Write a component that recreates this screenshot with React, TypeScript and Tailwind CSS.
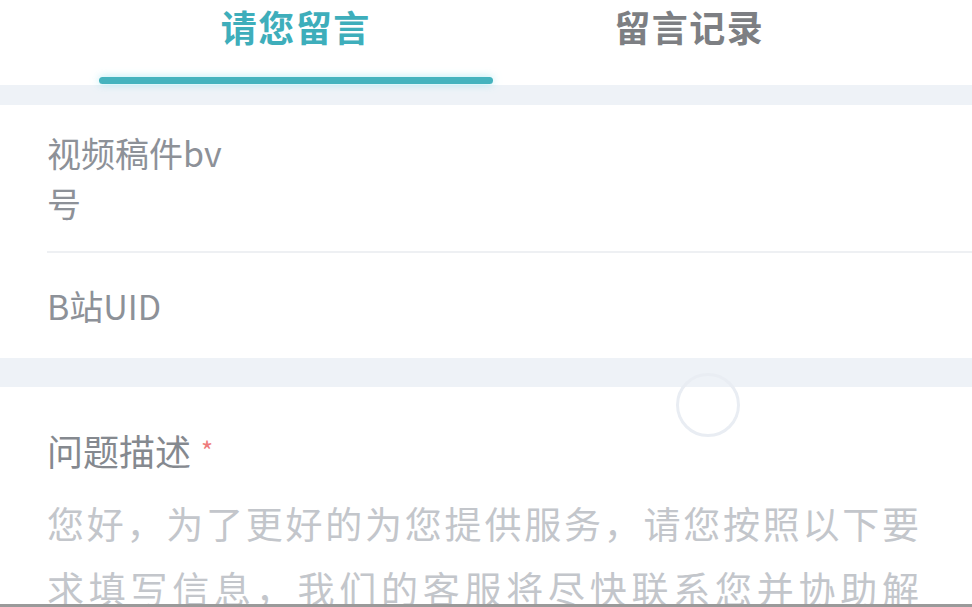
import { useState } from "react";

type Tab = "form" | "history";

const TABS: { key: Tab; label: string }[] = [
  { key: "form", label: "请您留言" },
  { key: "history", label: "留言记录" },
];

const FONT = "[font-family:'Noto_Sans_CJK_SC','Noto_Sans',sans-serif]";

// placeholder text, split the way the form wraps it (justified lines)
const PLACEHOLDER_LINES = [
  "您好，为了更好的为您提供服务，请您按照以下要",
  "求填写信息，我们的客服将尽快联系您并协助解",
];

function FieldRow({ label, last }: { label: string; last?: boolean }) {
  return (
    <div className={`flex items-center ${last ? "h-[105px]" : "h-[148px] border-b-2 border-[#eef0f3]"}`}>
      <div className="w-[196px] text-[34px] leading-[50px] text-[#8d9198]">{label}</div>
      <div className="flex-1" />
    </div>
  );
}

export default function App() {
  const [active, setActive] = useState<Tab>("form");

  return (
    <div className={`relative h-[607px] w-[972px] overflow-hidden bg-white ${FONT}`}>
      {/* tabs */}
      <div className="flex h-[85px] pl-[99px] pr-[86px]">
        {TABS.map((tab) => {
          const on = tab.key === active;
          return (
            <button
              key={tab.key}
              onClick={() => setActive(tab.key)}
              className="relative flex flex-1 justify-center pt-[1px]"
            >
              <span
                className={`text-[36px] font-bold leading-[50px] tracking-[1.5px] ${on ? "text-[#3eaebb]" : "text-[#7d7f83]"}`}
              >
                {tab.label}
              </span>
              {on ? (
                <span className="absolute bottom-[1px] left-0 right-0 h-[7px] rounded-full bg-[#45b3be] shadow-[0_0_8px_rgba(120,220,235,0.6)]" />
              ) : null}
            </button>
          );
        })}
      </div>

      <div className="h-[20px] bg-[#eef2f7]" />

      {/* basic info */}
      <div className="pl-[47px]">
        <FieldRow label="视频稿件bv号" />
        <FieldRow label="B站UID" last />
      </div>

      <div className="h-[29px] bg-[#eef2f7]" />

      {/* description */}
      <div className="pl-[47px] pr-[52px] pt-[38px]">
        <div className="flex items-center text-[36px] leading-[50px] text-[#85898f]">
          问题描述
          <span className="ml-[10px] text-[26px] text-[#ee7b7b]">*</span>
        </div>
        <div className="mt-[16px] text-[37px] leading-[65px] tracking-[1px] text-[#c3c6cb]">
          {PLACEHOLDER_LINES.map((line) => (
            <span key={line} className="block whitespace-nowrap text-justify [text-align-last:justify]">
              {line}
            </span>
          ))}
          <span className="block">决问题。</span>
        </div>
      </div>

      {/* touch ripple */}
      <div className="pointer-events-none absolute left-[676px] top-[373px] h-[64px] w-[64px] rounded-full border-[3px] border-[#e9edf3]" />

      <div className="absolute bottom-0 left-0 right-0 h-[3px] bg-[#9a9a9a]" />
    </div>
  );
}
